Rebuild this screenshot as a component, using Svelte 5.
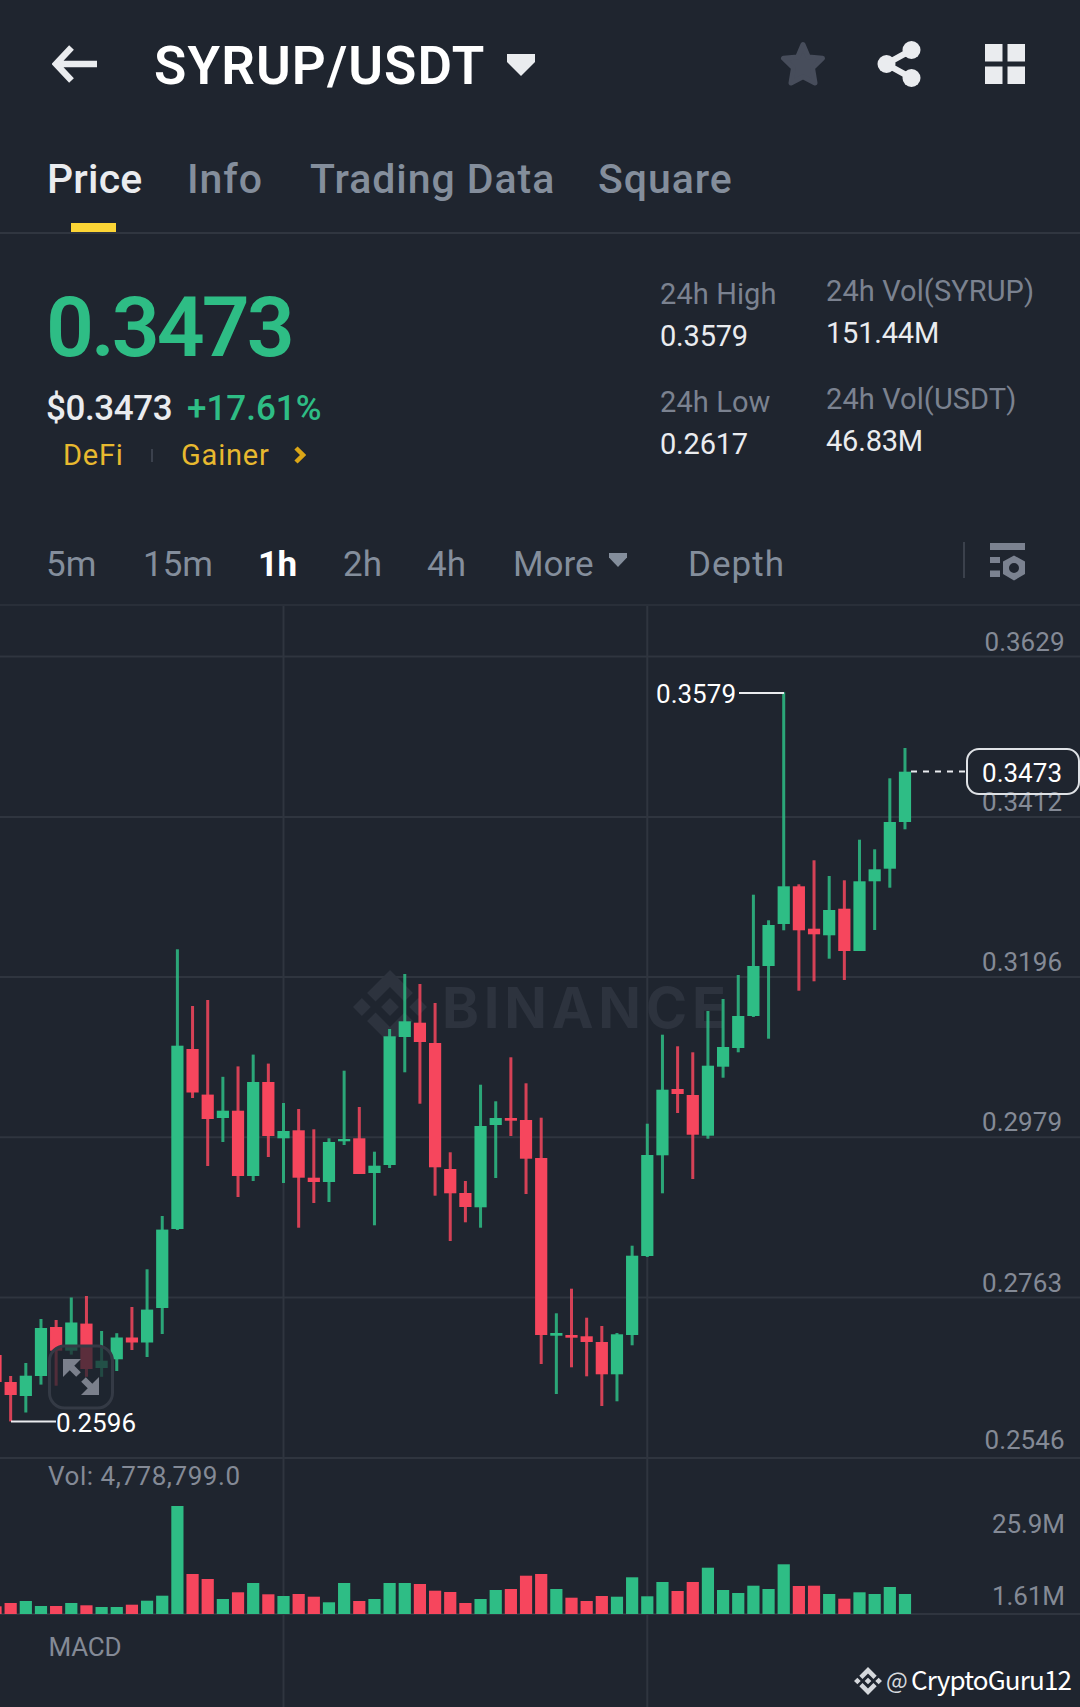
<script lang="ts">
	type Candle = [dir: 'u' | 'd', high: number, top: number, bottom: number, low: number, vol: number];

	const tabs = ['Price', 'Info', 'Trading Data', 'Square'];
	const intervals = ['5m', '15m', '1h', '2h', '4h'];

	let activeTab = $state('Price');
	let activeInterval = $state('1h');

	const stats = [
		{ label: '24h High', value: '0.3579' },
		{ label: '24h Low', value: '0.2617' },
		{ label: '24h Vol(SYRUP)', value: '151.44M' },
		{ label: '24h Vol(USDT)', value: '46.83M' }
	];

	// Chart canvas starts right below the interval bar
	const CHART_TOP = 606;
	const STEP = 15.158;
	const FIRST_X = -4.5;
	const VOL_BASE = 1614;

	const gridRows = [656.5, 817, 977, 1137.3, 1297.6, 1458, 1614];
	const gridCols = [283.5, 647.3];

	const axis = [
		{ text: '0.3629', x: 984.5, y: 651, w: 80 },
		{ text: '0.3412', x: 982, y: 811, w: 80 },
		{ text: '0.3196', x: 982, y: 971, w: 80 },
		{ text: '0.2979', x: 982, y: 1131, w: 80 },
		{ text: '0.2763', x: 982, y: 1292, w: 80 },
		{ text: '0.2546', x: 984.5, y: 1449, w: 80 },
		{ text: '25.9M', x: 992, y: 1533, w: 73 },
		{ text: '1.61M', x: 992, y: 1605, w: 73 }
	];

	const candles: Candle[] = [
		['d', 1355, 1355, 1382, 1382, 7.7],
		['d', 1376, 1382, 1395, 1421.4, 11],
		['u', 1363, 1375.7, 1396, 1412.5, 13],
		['u', 1319, 1328, 1376, 1384.6, 8],
		['d', 1320, 1327, 1350.7, 1385.7, 8],
		['u', 1297.5, 1322.5, 1350.7, 1354.6, 11],
		['d', 1296, 1323.6, 1369, 1376.8, 8.7],
		['u', 1331, 1360.7, 1368, 1376.8, 7],
		['u', 1333.2, 1337.5, 1359.3, 1371, 7],
		['d', 1307, 1337.5, 1342.5, 1350, 9.3],
		['u', 1269.3, 1309.6, 1342.5, 1357, 13.3],
		['u', 1216, 1229.6, 1308, 1334, 18.3],
		['u', 949.3, 1045.7, 1229, 1230, 108],
		['d', 1006, 1049, 1092.5, 1098, 40],
		['d', 1000, 1094.6, 1119, 1166, 35],
		['u', 1076.8, 1110.7, 1118, 1142, 15],
		['d', 1066.4, 1110.7, 1176, 1197, 21.7],
		['u', 1054.6, 1082, 1176, 1181, 31],
		['d', 1063.6, 1082, 1136, 1157, 19.7],
		['u', 1103, 1131, 1138.3, 1183, 18],
		['d', 1109, 1130.3, 1177.7, 1227.7, 20],
		['d', 1129.3, 1177.7, 1182, 1203, 17.3],
		['u', 1138.3, 1142, 1182, 1202, 11.7],
		['u', 1070.7, 1139, 1141.3, 1145, 31],
		['d', 1107, 1138.3, 1174, 1174, 13],
		['u', 1151.7, 1165.7, 1173, 1225.3, 15],
		['u', 1029, 1036.3, 1165, 1168, 31],
		['u', 974, 1021.3, 1037, 1072.3, 31],
		['d', 984, 1022.7, 1042, 1103.7, 30],
		['d', 1003, 1043, 1167.3, 1195.7, 23.3],
		['d', 1152.3, 1169, 1193.3, 1241, 22],
		['d', 1181, 1193, 1207, 1222.3, 11],
		['u', 1084.7, 1126, 1207.3, 1227.7, 15],
		['u', 1101.3, 1118, 1125, 1178, 24],
		['d', 1057.3, 1118, 1120.7, 1136, 25],
		['d', 1083.3, 1120, 1158.7, 1194, 38.3],
		['d', 1117.7, 1158, 1335, 1364, 40],
		['u', 1313.3, 1333, 1335.7, 1394, 25],
		['d', 1288.7, 1335, 1337.7, 1367.3, 16.3],
		['d', 1317.7, 1336.3, 1342, 1376.3, 13],
		['d', 1326, 1342, 1374.3, 1406, 18],
		['u', 1333, 1334.3, 1374.3, 1401.3, 17.3],
		['u', 1245.7, 1255.7, 1335, 1345.3, 36.7],
		['u', 1123.7, 1155, 1256, 1257, 17.7],
		['u', 1034.7, 1089.7, 1155.3, 1193.3, 32],
		['d', 1046.3, 1089, 1094, 1113, 23],
		['d', 1052.3, 1095, 1134.7, 1179, 32],
		['u', 1011, 1065.7, 1135.7, 1138.7, 46.3],
		['u', 999, 1047, 1066.7, 1077.7, 24],
		['u', 975, 1016, 1048, 1052.3, 21],
		['u', 894.7, 966, 1016, 1017, 28.3],
		['u', 920.3, 925, 966, 1038.7, 25],
		['u', 692.3, 886.3, 924, 930.3, 49.7],
		['d', 884.3, 886.3, 930.3, 990.7, 28],
		['d', 860.3, 928.7, 934.3, 981.3, 28.3],
		['u', 876, 910, 935.3, 958.7, 20],
		['d', 880.3, 908.7, 951, 980, 15.3],
		['u', 839.7, 881.3, 951, 951, 21.7],
		['u', 849.3, 869.3, 881.3, 930, 20],
		['u', 778.3, 822, 868.7, 887.7, 27],
		['u', 748, 771.7, 822, 829.3, 20]
	];

	const bars = candles.map(([dir, high, top, bottom, low, vol], i) => ({
		dir,
		high,
		top,
		bottom,
		low,
		vol,
		x: FIRST_X + i * STEP
	}));
</script>

{#snippet logo()}
	<path d="M50 0 81 31 69.5 42.5 50 23 30.5 42.5 19 31Z" />
	<path d="M50 100 81 69 69.5 57.5 50 77 30.5 57.5 19 69Z" />
	<path d="M12 38 24 50 12 62 0 50ZM88 38 100 50 88 62 76 50ZM50 38 62 50 50 62 38 50Z" />
{/snippet}

<main class="screen">
	<header class="header">
		<svg class="back" width="46" height="38" viewBox="0 0 46 38">
			<path d="M19.5 2.5 4 19l15.500 16.500M4 19h41" fill="none" stroke="#eaecef" stroke-width="6.500" />
		</svg>
		<h1>SYRUP/USDT</h1>
		<svg class="caret" width="28" height="22" viewBox="0 0 28 22">
			<path d="M0 0h28v8L14 22 0 8Z" fill="#eaecef" />
		</svg>
		<div class="actions">
			<svg width="46" height="48" viewBox="0 0 46 48">
				<path
					d="M23 4.500 28.300 17 42.500 18.300 32.500 28 35 43 23 36.800 11 43 13.500 28 3.500 18.300 17.700 17Z"
					fill="#474d5b"
					stroke="#474d5b"
					stroke-width="5"
					stroke-linejoin="round"
				/>
			</svg>
			<svg width="44" height="48" viewBox="0 0 44 48">
				<path d="M34.500 10 9 24l25.500 14" fill="none" stroke="#eaecef" stroke-width="6" />
				<circle cx="34.500" cy="10" r="9" fill="#eaecef" />
				<circle cx="9.500" cy="24" r="9" fill="#eaecef" />
				<circle cx="34.500" cy="38" r="9" fill="#eaecef" />
			</svg>
			<svg width="40" height="40" viewBox="0 0 40 40">
				<path d="M0 0h17.500v17.500H0ZM22.500 0H40v17.500H22.500ZM0 22.500h17.500V40H0ZM22.500 22.500H40V40H22.500Z" fill="#eaecef" />
			</svg>
		</div>
	</header>

	<nav class="tabs">
		{#each tabs as tab}
			<button class="tab" class:active={tab === activeTab} onclick={() => (activeTab = tab)}>{tab}</button>
		{/each}
	</nav>

	<section class="summary">
		<div class="quote">
			<div class="price">0.3473</div>
			<div class="change">
				<span class="fiat">$0.3473</span>
				<span class="percent">+17.61%</span>
			</div>
			<div class="tags">
				<span class="defi">DeFi</span>
				<i></i>
				<span class="gainer">Gainer</span>
				<svg width="12" height="18" viewBox="0 0 12 18">
					<path d="M2 2l7 7-7 7" fill="none" stroke="#dba617" stroke-width="4.500" />
				</svg>
			</div>
		</div>
		<div class="stats">
			{#each stats as stat}
				<dl>
					<dt>{stat.label}</dt>
					<dd>{stat.value}</dd>
				</dl>
			{/each}
		</div>
	</section>

	<nav class="intervals">
		{#each intervals as item}
			<button class="interval" class:active={item === activeInterval} onclick={() => (activeInterval = item)}>{item}</button>
		{/each}
		<button class="interval more">
			More
			<svg width="18" height="14" viewBox="0 0 18 14"><path d="M0 0h18v4.500L9 14 0 4.500Z" fill="#848e9c" /></svg>
		</button>
		<button class="interval depth">Depth</button>
		<span class="divider"></span>
		<svg class="settings" width="36" height="38" viewBox="0 0 36 38" fill="#7b8290">
			<path d="M0 0h35v7H0ZM0 14h10v6H0ZM0 27.500h10v6.500H0Z" />
			<path fill-rule="evenodd" d="M24 12.500 35 18.500v12.500L24 37.500 13 31V18.500ZM24 20a5 5 0 1 0 0 10a5 5 0 1 0 0-10Z" />
		</svg>
	</nav>

	<svg class="chart" width="1080" height="1101" viewBox="0 {CHART_TOP} 1080 1101">
		{#each gridRows as y}
			<line class="grid" x1="0" x2="1080" y1={y} y2={y} />
		{/each}
		{#each gridCols as x}
			<line class="grid" x1={x} x2={x} y1={CHART_TOP} y2="1707" />
		{/each}

		<g class="watermark">
			<g transform="translate(353 970) scale(0.74)">{@render logo()}</g>
			<text x="442" y="1028" textLength="284">BINANCE</text>
		</g>

		{#each axis as label}
			<text class="axis" x={label.x} y={label.y} textLength={label.w}>{label.text}</text>
		{/each}

		{#each bars as bar}
			<g class={bar.dir}>
				<rect class="wick" x={bar.x - 1.5} y={bar.high} width="3" height={bar.low - bar.high} />
				<rect x={bar.x - 6.1} y={bar.top} width="12.2" height={bar.bottom - bar.top} />
				<rect x={bar.x - 6.1} y={VOL_BASE - bar.vol} width="12.2" height={bar.vol} />
			</g>
		{/each}

		<!-- high / low markers -->
		<path class="marker" d="M739 693h45M11 1421.500h45" />
		<text class="value" x="656" y="702.500" textLength="80">0.3579</text>
		<text class="value" x="56" y="1432" textLength="80">0.2596</text>

		<!-- last price -->
		<path class="marker" d="M911 771.500h56" stroke-dasharray="6 6" />
		<rect class="badge" x="967" y="749" width="112" height="45" rx="12" />
		<text class="value" x="982" y="782" textLength="80">0.3473</text>

		<text class="axis" x="48" y="1485" textLength="192">Vol: 4,778,799.0</text>
		<text class="axis" x="48.500" y="1656" textLength="73">MACD</text>

		<!-- fullscreen toggle -->
		<rect class="expand" x="49.500" y="1346" width="63" height="62" rx="15" />
		<g class="arrows">
			<path d="M63 1359h18l-18 18ZM99 1395h-18l18-18Z" />
			<path class="shaft" d="M69 1365l9.500 9.500M93 1389l-9.500-9.500" />
		</g>

		<g class="credit">
			<g transform="translate(854 1667) scale(0.28)" fill="#d5d8dc">{@render logo()}</g>
			<text class="at" x="886" y="1689" textLength="22">@</text>
			<text x="911" y="1690" textLength="161">CryptoGuru12</text>
		</g>
	</svg>
</main>

<style>
	:global(body) {
		margin: 0;
		background: #1f252f;
	}

	.screen {
		width: 1080px;
		height: 1707px;
		overflow: hidden;
		background: #1f252f;
		color: #eaecef;
		font-family: Roboto, 'Liberation Sans', sans-serif;
		white-space: nowrap;
	}

	svg {
		display: block;
		flex: none;
	}

	button {
		padding: 0;
		border: 0;
		background: none;
		color: inherit;
		font: inherit;
		text-align: left;
	}

	/* Header */
	.header {
		box-sizing: border-box;
		display: flex;
		align-items: center;
		height: 132px;
		padding: 0 55px 4px 52px;
	}

	h1 {
		width: 353px;
		margin: 0 0 0 56px;
		color: #fff;
		font-size: 53px;
		font-weight: 600;
		letter-spacing: 1.1px;
		line-height: 62px;
		padding-top: 4px;
	}

	.caret {
		margin-top: 2px;
	}

	.actions {
		display: flex;
		align-items: center;
		margin-left: auto;
	}

	.actions svg:nth-child(2) {
		margin: 0 64px 0 51px;
	}

	/* Tabs */
	.tabs {
		box-sizing: border-box;
		display: grid;
		grid-template-columns: 140px 123px 288px 150px;
		height: 102px;
		padding-left: 47px;
		border-bottom: 2px solid #303640;
	}

	.tab {
		display: flex;
		flex-direction: column;
		padding-top: 24px;
		color: #848e9c;
		font-size: 41px;
		font-weight: 500;
		letter-spacing: 0.95px;
		line-height: 47px;
	}

	.tab.active {
		color: #eaecef;
		letter-spacing: 0.2px;
	}

	.tab.active::after {
		content: '';
		width: 45px;
		height: 9px;
		margin: 20px 0 0 24px;
		background: #fcd535;
	}

	/* Price summary */
	.summary {
		display: flex;
		justify-content: space-between;
		height: 292px;
	}

	.quote {
		padding: 45px 0 0 46px;
	}

	.price {
		color: #2ebd85;
		font-size: 84px;
		font-weight: 600;
		line-height: 98px;
		letter-spacing: -3px;
	}

	.change {
		display: flex;
		margin-top: 11px;
		font-size: 35px;
		font-weight: 500;
		line-height: 42px;
	}

	.fiat {
		width: 141px;
		letter-spacing: -0.4px;
	}

	.percent {
		color: #2ebd85;
	}

	.tags {
		display: flex;
		align-items: center;
		margin: 5px 0 0 17px;
		color: #e8b92f;
		font-size: 29px;
		letter-spacing: 0.8px;
		line-height: 40px;
	}

	.tags i {
		width: 2px;
		height: 13px;
		background: #3b414d;
	}

	.defi {
		width: 88px;
	}

	.gainer {
		width: 113px;
		margin-left: 28px;
	}

	.stats {
		display: grid;
		grid-template-columns: 166px 254px;
		grid-template-rows: 108px 108px;
		grid-auto-flow: column;
		padding-top: 39px;
	}

	dl {
		margin: 0;
		font-size: 29px;
		line-height: 42px;
	}

	dl:nth-child(n + 3) {
		margin-top: -3px;
	}

	dt {
		color: #7b8290;
		letter-spacing: 0.1px;
	}

	dd {
		margin: 0;
		letter-spacing: -0.2px;
	}

	/* Interval bar */
	.intervals {
		box-sizing: border-box;
		display: grid;
		grid-template-columns: 97px 115px 85px 84px 86px 175px 275px 27px 36px;
		align-items: center;
		height: 80px;
		padding: 0 0 7px 46px;
		border-bottom: 2px solid #292f39;
	}

	.interval {
		padding-top: 5px;
		color: #848e9c;
		font-size: 35px;
		line-height: 41px;
	}

	.interval.active {
		color: #fff;
		font-weight: 700;
		letter-spacing: -0.5px;
	}

	.more {
		display: flex;
		gap: 15px;
	}

	.more svg {
		margin-top: 9px;
	}

	.depth {
		letter-spacing: 1px;
	}

	.divider {
		width: 2px;
		height: 36px;
		margin-bottom: 4px;
		background: #3b414c;
	}

	/* Chart */
	.chart {
		font-size: 26px;
	}

	.grid {
		stroke: #2f353f;
		stroke-width: 2;
	}

	.watermark {
		fill: #2d333e;
		font-family: Inter, sans-serif;
		font-size: 56px;
		font-weight: 700;
	}

	.u {
		fill: #2ebd85;
	}

	.d {
		fill: #f6465d;
	}

	.wick {
		opacity: 0.85;
	}

	.axis {
		fill: #848a96;
	}

	.value {
		fill: #fff;
	}

	.marker {
		fill: none;
		stroke: #eaecef;
		stroke-width: 2;
	}

	.badge {
		fill: none;
		stroke: #dfe2e6;
		stroke-width: 2;
	}

	.expand {
		fill: #1f252f;
		fill-opacity: 0.72;
		stroke: #343a45;
		stroke-width: 3;
	}

	.arrows {
		fill: #7b808c;
	}

	.shaft {
		stroke: #7b808c;
		stroke-width: 6.5;
	}

	.credit {
		fill: #fff;
		font-family: 'Noto Sans CJK SC', 'Noto Sans', sans-serif;
		font-size: 26px;
		font-weight: 400;
	}

	.at {
		fill: #d5d8dc;
		font-size: 23px;
	}
</style>
